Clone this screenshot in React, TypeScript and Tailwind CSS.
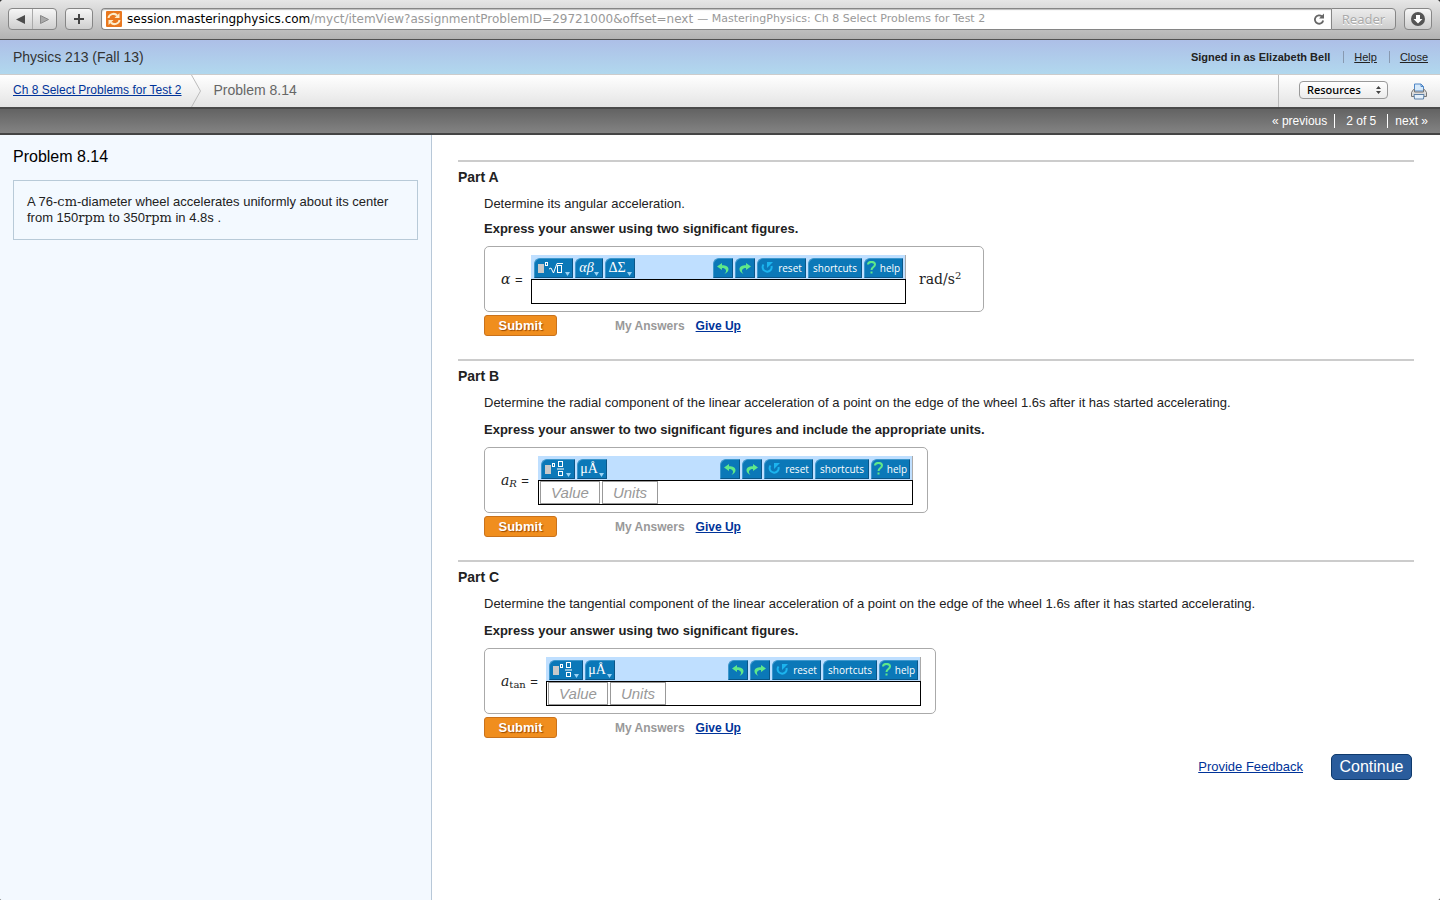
import React from 'react'

type ToolProps = { label: string; className: string; children: React.ReactNode }

function Tool({ label, className, children }: ToolProps) {
  return (
    <button
      type="button"
      aria-label={label}
      className={`flex h-5 items-center justify-center rounded-tl-[6px] border border-t-[#3d97cc] border-r-[#0a5688] border-b-[#0a5688] border-l-[#3d97cc] bg-[#0b78b8] font-['Open_Sans',sans-serif] text-[10px] leading-4 font-medium text-white ${className}`}
    >
      {children}
    </button>
  )
}

function DropMark() {
  return (
    <svg width="5" height="4" viewBox="0 0 5 4" className="mb-px shrink-0 self-end">
      <path d="M0 0h5L2.500 4z" fill="#9bd3f5" />
    </svg>
  )
}

function RootTool() {
  return (
    <Tool label="Templates" className="w-[39px]">
      <svg width="27" height="16" viewBox="0 0 27 16" fill="none">
        <rect x="0" y="4" width="6" height="9" fill="#c9c9c9" />
        <rect x="7.500" y="2.500" width="2" height="3" stroke="#fff" />
        <path d="M11 9l2-1 2.500 5L19 3.500h6" stroke="#fff" />
        <rect x="19.500" y="5.500" width="4" height="7" stroke="#fff" />
      </svg>
      <DropMark />
    </Tool>
  )
}

function FractionTool() {
  return (
    <Tool label="Templates" className="w-[34px] gap-px">
      <svg width="20" height="16" viewBox="0 0 20 16" fill="none">
        <rect x="0" y="4" width="6" height="9" fill="#c9c9c9" />
        <rect x="7.500" y="2.500" width="2" height="3" stroke="#fff" />
        <rect x="13.500" y=".500" width="4" height="5" stroke="#fff" />
        <path d="M12 8h7" stroke="#fff" />
        <rect x="13.500" y="10.500" width="4" height="4" stroke="#fff" />
      </svg>
      <DropMark />
    </Tool>
  )
}

function BendArrow({ flip }: { flip?: boolean }) {
  return (
    <svg width="14" height="14" viewBox="0 0 14 14" className={flip ? '-scale-x-100' : ''}>
      <path
        d="M1 5.500L6 2v2.300c4 0 6.500 1.200 6.500 4 0 2.200-1.700 3.700-4 4.700 1.400-1.600 2-3 1.200-4.200C9 7.500 8 7 6 7v2z"
        fill="#5fe88a"
      />
    </svg>
  )
}

function EditTools() {
  return (
    <div className="flex gap-0.5">
      <Tool label="Undo" className="w-5">
        <BendArrow />
      </Tool>
      <Tool label="Redo" className="w-5">
        <BendArrow flip />
      </Tool>
      <Tool label="Reset" className="w-[49px] gap-1">
        <svg width="13" height="13" viewBox="0 0 13 13" fill="none">
          <path d="M2.500 3.500A4.500 4.500 0 1 0 10.500 5" stroke="#1cb4ee" strokeWidth="2" />
          <path d="M6 7V1h6L9.500 3.500z" fill="#1cb4ee" />
        </svg>
        reset
      </Tool>
      <Tool label="Shortcuts" className="w-[54px]">
        shortcuts
      </Tool>
      <Tool label="Help" className="w-[39px] gap-1">
        <svg width="9" height="13" viewBox="0 0 9 13" fill="none">
          <path d="M1 3.500C1 0 8 0 8 3.500 8 6 4.500 6 4.500 9" stroke="#5fe88a" strokeWidth="2" />
          <rect x="3.500" y="10.500" width="2" height="2" fill="#5fe88a" />
        </svg>
        help
      </Tool>
    </div>
  )
}

function UnitsEntry() {
  const box =
    "h-[23px] border border-[#999] bg-white text-center font-['Liberation_Sans',Arial,sans-serif] text-[15px] italic text-[#333] outline-none placeholder:text-[#999] placeholder:opacity-100"
  return (
    <div className="flex h-[25px] gap-0.5 border border-black bg-white pl-px">
      <input aria-label="Value" placeholder="Value" className={`${box} w-[60px]`} />
      <input aria-label="Units" placeholder="Units" className={`${box} w-14`} />
    </div>
  )
}

type PartProps = {
  name: string
  question: string
  hint: string
  symbol: React.ReactNode
  symbolWidth: string
  tools: React.ReactNode
  entry: React.ReactNode
  after?: React.ReactNode
  tight?: boolean
}

function Part({ name, question, hint, symbol, symbolWidth, tools, entry, after, tight }: PartProps) {
  return (
    <section className="mb-[23px] border-t-2 border-[#ccc]">
      <h2 className="mt-[7px] text-[14px] leading-4 font-bold text-[#222]">{name}</h2>
      <div className="pl-[26px]">
        <p className="mt-[11px] leading-4">{question}</p>
        <p className={`leading-4 font-bold ${tight ? 'mt-[9px]' : 'mt-[11px]'}`}>{hint}</p>
        <div className="mt-[9px] flex h-[66px] w-fit items-center rounded-[5px] border border-[#aaa] pr-[14px] pl-4">
          <span className={`font-['DejaVu_Serif',serif] text-[14px] whitespace-nowrap ${symbolWidth}`}>
            {symbol} <span className="font-['Liberation_Sans',sans-serif] text-[13px]">=</span>
          </span>
          <div className="w-[375px]">
            <div className="flex h-6 items-end justify-between border-r border-[#aaa] bg-[#bfdfff] pr-0.5 pb-px pl-[3px]">
              <div className="flex gap-0.5">{tools}</div>
              <EditTools />
            </div>
            {entry}
          </div>
          {after}
        </div>
        <div className="mt-[3px] flex items-center text-[12px] font-bold">
          <button
            type="button"
            className="h-[21px] w-[73px] rounded-[3px] border border-[#c9721c] bg-[#f08e1e] text-[13px] leading-4 text-white [text-shadow:1px_1px_1px_#9a4a00]"
          >
            Submit
          </button>
          <span className="ml-[58px] text-[#999]">My Answers</span>
          <a href="#" className="ml-[11px] text-[#039] underline">
            Give Up
          </a>
        </div>
      </div>
    </section>
  )
}

function BrowserBar() {
  const btn =
    'flex h-[22px] items-center justify-center rounded-[4px] border border-[#868686] bg-linear-to-b from-[#f6f6f6] to-[#cfcfcf]'
  return (
    <div className="flex h-10 items-center border-b border-[#515151] bg-linear-to-b from-[#e6e6e6] to-[#b2b2b2] px-2 pb-px">
      <div className={`${btn} w-[49px]`}>
        <button type="button" aria-label="Back" className="flex h-full flex-1 items-center justify-center border-r border-[#aaa]">
          <svg width="9" height="9" viewBox="0 0 9 9"><path d="M9 0v9L0 4.500z" fill="#4c4c4c" /></svg>
        </button>
        <button type="button" aria-label="Forward" className="flex h-full flex-1 items-center justify-center">
          <svg width="9" height="9" viewBox="0 0 9 9"><path d="M.500.500v8L8.500 4.500z" fill="#aaa" stroke="#888" /></svg>
        </button>
      </div>
      <button type="button" aria-label="Add bookmark" className={`${btn} ml-2 w-7`}>
        <svg width="10" height="10" viewBox="0 0 10 10"><path d="M5 0v10M0 5h10" stroke="#444" strokeWidth="2" /></svg>
      </button>
      <div className="ml-2 flex h-[22px] min-w-0 flex-1 items-center rounded-l-[4px] border border-r-0 border-[#868686] bg-white pl-1 font-['DejaVu_Sans',sans-serif] text-[12px] text-[#999] shadow-[inset_0_1px_1px_#bbb]">
        <svg width="16" height="16" viewBox="0 0 16 16" fill="none" className="shrink-0">
          <rect width="16" height="16" rx="1" fill="#e9781f" />
          <path d="M2.500 7C3 3 8.500 1.500 11 4.500M13.500 9C13 13 7.500 14.500 5 11.500" stroke="#fdeccb" strokeWidth="2" />
          <path d="M13.500 2v5H8.500zM2.500 14V9h5z" fill="#fdeccb" />
        </svg>
        <span className="ml-[5px] text-black">session.masteringphysics.com</span>
        <span>/myct/itemView?assignmentProblemID=29721000&amp;offset=next</span>
        <span className="ml-1 truncate text-[11px]">— MasteringPhysics: Ch 8 Select Problems for Test 2</span>
        <button type="button" aria-label="Reload" className="mr-[6px] ml-auto">
          <svg width="12" height="13" viewBox="0 0 12 13" fill="none">
            <path d="M9 3.500A4.200 4.200 0 1 0 10.200 7.500" stroke="#666" strokeWidth="1.800" />
            <path d="M6 5.500h5V.500z" fill="#666" />
          </svg>
        </button>
      </div>
      <button
        type="button"
        className="h-[22px] w-[65px] rounded-r-[4px] border border-[#868686] bg-linear-to-b from-[#ececec] to-[#cdcdcd] font-['Noto_Sans',sans-serif] text-[13px] leading-4 text-[#aaa] [text-shadow:0_1px_0_#fff]"
      >
        Reader
      </button>
      <button type="button" aria-label="Downloads" className={`${btn} ml-2 w-7`}>
        <svg width="14" height="14" viewBox="0 0 14 14">
          <circle cx="7" cy="7" r="7" fill="#555" />
          <path d="M5 3h4v4h2.500L7 11.500 2.500 7H5z" fill="#fff" />
        </svg>
      </button>
    </div>
  )
}

function PrinterIcon() {
  return (
    <svg width="16" height="17" viewBox="0 0 16 17">
      <path d="M3.500 8V1h6.500l2.500 2.500V8z" fill="#d6e9fa" stroke="#4f86c6" />
      <path d="M10 1v2.500h2.500" fill="none" stroke="#4f86c6" />
      <path d="M3.500 6.500H2.500l-2 3v4h15v-4l-2-3h-1V9h-9z" fill="#ddd" stroke="#777" />
      <path d="M3 11.500h10l-.500 4.500h-9z" fill="#e4f0fb" stroke="#5c80a8" />
    </svg>
  )
}

const greek = "font-['Liberation_Serif',serif] text-[14px] font-normal"
const unit = "font-['DejaVu_Serif',serif]"

export default function App() {
  return (
    <div className="min-h-screen bg-[#333]">
      <div className="flex min-h-screen flex-col overflow-hidden rounded-t-[4px] rounded-b-[2px] bg-white font-['Liberation_Sans',Arial,sans-serif] text-[13px] text-[#222]">
        <BrowserBar />

        <header className="flex h-[34px] items-center justify-between bg-linear-to-b from-[#adbfe7] to-[#b1d8ee] pr-3 pl-[13px]">
          <span className="text-[14px] text-[#333]">Physics 213 (Fall 13)</span>
          <div className="flex items-center text-[11px] leading-3">
            <span className="font-bold">Signed in as Elizabeth Bell</span>
            <a href="#" className="ml-[13px] border-l border-[#8899b0] pl-[10px] underline">Help</a>
            <a href="#" className="ml-[12px] border-l border-[#8899b0] pl-[10px] underline">Close</a>
          </div>
        </header>

        <nav className="flex h-[33px] items-stretch border-t border-[#ccc] bg-linear-to-b from-white to-[#e4e4e4] pl-[13px]">
          <a href="#" className="self-center pb-0.5 text-[12px] text-[#039] underline">Ch 8 Select Problems for Test 2</a>
          <svg width="11" height="32" viewBox="0 0 11 32" fill="none" className="ml-[9px]">
            <path d="M.500 0l9 16-9 16" stroke="#bbb" />
          </svg>
          <span className="ml-3 self-center pb-0.5 text-[14px] text-[#666]">Problem 8.14</span>
          <div className="ml-auto flex items-center border-l border-[#bbb] pr-[13px] pl-5">
            <span className="relative mb-[3px] block">
              <select
                aria-label="Resources"
                className="block h-[18px] w-[89px] appearance-none rounded-[4px] border border-[#999] bg-linear-to-b from-white to-[#ececec] pl-[7px] font-['Noto_Sans',sans-serif] text-[11px] leading-4 font-medium text-black"
              >
                <option>Resources</option>
              </select>
              <svg width="5" height="8" viewBox="0 0 5 8" className="pointer-events-none absolute top-[5px] right-[7px]">
                <path d="M0 3h5L2.500 0zM0 5h5L2.500 8z" fill="#444" />
              </svg>
            </span>
            <button type="button" aria-label="Print" className="ml-[23px]">
              <PrinterIcon />
            </button>
          </div>
        </nav>

        <div className="flex h-7 items-center justify-end border-t-2 border-b-2 border-t-[#4a4a4a] border-b-[#444] bg-linear-to-b from-[#636363] to-[#838383] pr-3 text-[12px] leading-[14px] text-white">
          <a href="#" className="pr-[7px]">« previous</a>
          <span className="border-x border-white px-[11px]">2 of 5</span>
          <a href="#" className="pl-[7px]">next »</a>
        </div>

        <div className="flex flex-1">
          <aside className="w-[30%] border-r border-[#b8c8d8] bg-[#f3f9ff] px-[13px] pt-3">
            <h1 className="text-[16px] leading-5 text-black">Problem 8.14</h1>
            <p className="mt-[13px] border border-[#b8cad8] p-[13px] leading-4">
              A 76-<span className={unit}>cm</span>-diameter wheel accelerates uniformly about its center from 150
              <span className={unit}>rpm</span> to 350<span className={unit}>rpm</span> in 4.8
              <span className={unit}>s</span> .
            </p>
          </aside>

          <main className="flex-1 px-[26px] pt-[25px]">
            <Part
              name="Part A"
              question="Determine its angular acceleration."
              hint="Express your answer using two significant figures."
              symbol={<i>α</i>}
              symbolWidth="w-[30px]"
              tight
              tools={
                <>
                  <RootTool />
                  <Tool label="Greek letters" className="w-7">
                    <i className={greek}>αβ</i>
                    <DropMark />
                  </Tool>
                  <Tool label="Capital Greek letters" className="w-[30px] gap-px">
                    <span className={greek}>ΔΣ</span>
                    <DropMark />
                  </Tool>
                </>
              }
              entry={
                <input
                  aria-label="Angular acceleration"
                  className="block h-[25px] w-full border border-black bg-white px-1 outline-none"
                />
              }
              after={
                <span className="mr-2 ml-[13px] font-['DejaVu_Serif',serif] text-[14px]">
                  rad/s<sup className="text-[10px]">2</sup>
                </span>
              }
            />
            <Part
              name="Part B"
              question="Determine the radial component of the linear acceleration of a point on the edge of the wheel 1.6s after it has started accelerating."
              hint="Express your answer to two significant figures and include the appropriate units."
              symbol={<i>a<sub className="text-[10px]">R</sub></i>}
              symbolWidth="w-[37px]"
              tools={
                <>
                  <FractionTool />
                  <Tool label="Units" className="w-[30px] gap-px">
                    <span className={greek}>μÅ</span>
                    <DropMark />
                  </Tool>
                </>
              }
              entry={<UnitsEntry />}
            />
            <Part
              name="Part C"
              question="Determine the tangential component of the linear acceleration of a point on the edge of the wheel 1.6s after it has started accelerating."
              hint="Express your answer using two significant figures."
              symbol={<><i>a</i><sub className="text-[10px]">tan</sub></>}
              symbolWidth="w-[45px]"
              tools={
                <>
                  <FractionTool />
                  <Tool label="Units" className="w-[30px] gap-px">
                    <span className={greek}>μÅ</span>
                    <DropMark />
                  </Tool>
                </>
              }
              entry={<UnitsEntry />}
            />
            <div className="-mt-[7px] flex items-center justify-end pr-0.5 pb-6">
              <a href="#" className="text-[#039] underline">Provide Feedback</a>
              <button
                type="button"
                className="ml-7 h-[26px] w-[81px] rounded-[5px] border border-[#0f3a6c] bg-[#2a5c9c] text-[16px] leading-5 text-white"
              >
                Continue
              </button>
            </div>
          </main>
        </div>
      </div>
    </div>
  )
}
